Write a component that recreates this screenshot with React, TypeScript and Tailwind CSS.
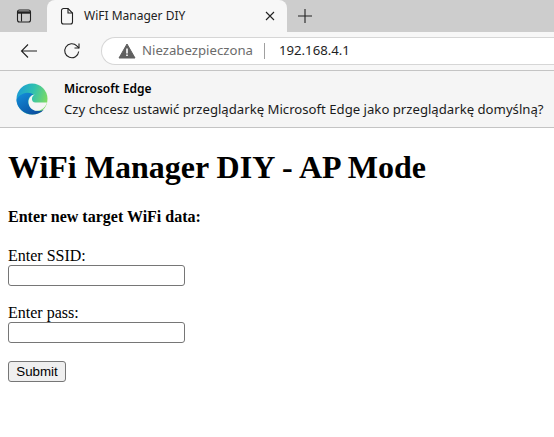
const uiFont = "font-['Noto_Sans','Open_Sans',sans-serif]";

function TabStripIcon() {
  return (
    <svg width="16" height="16" viewBox="0 0 16 16" fill="none" stroke="#222" strokeWidth="1.1">
      <rect x="1.5" y="2" width="13" height="12" rx="2" />
      <path d="M2 4.5H14" strokeWidth="2.4" />
      <path d="M5.5 5V13.5" />
    </svg>
  );
}

function PageIcon() {
  return (
    <svg width="16" height="18" viewBox="0 0 16 18" fill="none" stroke="#222" strokeWidth="1.1">
      <path d="M2.5 3.5a2 2 0 0 1 2-2H9l4.5 4.5v9a2 2 0 0 1-2 2h-7a2 2 0 0 1-2-2z" />
      <path d="M9 1.5V6h4.5" />
    </svg>
  );
}

function EdgeLogo() {
  return (
    <svg width="32" height="32" viewBox="0 0 32 32">
      <defs>
        <linearGradient id="edgeTop" x1="0" y1="0.2" x2="1" y2="0.5">
          <stop offset="0" stopColor="#1a9bd8" />
          <stop offset="0.5" stopColor="#2fc0b0" />
          <stop offset="1" stopColor="#7edb62" />
        </linearGradient>
        <linearGradient id="edgeLow" x1="0" y1="0" x2="0.7" y2="1">
          <stop offset="0" stopColor="#1390dc" />
          <stop offset="1" stopColor="#0b4f9f" />
        </linearGradient>
      </defs>
      <circle cx="16" cy="16" r="15.5" fill="url(#edgeTop)" />
      <path d="M0.5 17C1 25 8 31.5 16.5 31.5c4.4 0 8.3-1.7 11.1-4.5-3.4 1.500-7.6 1.400-10.900-.7C12.500 23.700 11 18.500 13 15c1-1.800 2.800-3 4.800-3.200-2.400-2-6.800-2.800-10.800-1C3.500 12.300 1 14.500.5 17z" fill="url(#edgeLow)" />
      <path d="M31 19.500C28 19.500 22 19.500 19.500 19.500C17 19.500 15.500 17.500 16 15C16.500 13 17.500 12 19 11.500C15.500 11.500 12.500 15 12.500 19C12.500 24 16.500 28 21 27.800C24.500 27.600 27 26 29 23.500C30 22 30.700 21 31 19.500z" fill="#f5f5f5" />
    </svg>
  );
}

function FormField({ label }: { label: string }) {
  return (
    <label className="block">
      <span className="block h-[18px] leading-[18px]">{label}</span>
      <input
        type="text"
        className="block h-[21px] w-[177px] rounded-[3px] border border-[#767676] bg-white"
      />
    </label>
  );
}

export default function App() {
  return (
    <div className="flex h-[437px] w-[554px] flex-col overflow-hidden bg-white text-black">
      <div className={`${uiFont} flex h-[32px] items-end bg-[#cdcdcd] text-[#222]`}>
        <div className="flex h-[32px] w-[47px] items-center justify-center pl-[1px]">
          <TabStripIcon />
        </div>
        <div className="flex h-[32px] w-[240px] items-center rounded-t-[8px] bg-[#f7f7f7] pl-[12px] pr-[12px]">
          <PageIcon />
          <span className="ml-[9px] flex-1 text-[12px] leading-none">WiFI Manager DIY</span>
          <svg width="10" height="10" viewBox="0 0 10 10" stroke="#222" strokeWidth="1.1">
            <path d="M1 1L9 9M9 1L1 9" />
          </svg>
        </div>
        <div className="flex h-[32px] w-[36px] items-center justify-center">
          <svg width="16" height="16" viewBox="0 0 16 16" stroke="#222" strokeWidth="1.1">
            <path d="M8 1V15M1 8H15" />
          </svg>
        </div>
      </div>

      <div className={`${uiFont} flex h-[38px] items-center bg-[#f7f7f7]`}>
        <div className="flex w-[47px] justify-center pl-[10px]">
          <svg width="18" height="16" viewBox="0 0 18 16" fill="none" stroke="#222" strokeWidth="1.1">
            <path d="M1.5 8H17M8 1.5L1.5 8L8 14.5" />
          </svg>
        </div>
        <div className="flex w-[54px] justify-center pr-[4px]">
          <svg width="18" height="18" viewBox="0 0 18 18" fill="none" stroke="#222" strokeWidth="1.1">
            <path d="M15.7 9.5a7 7 0 1 1-1.9-5.6L16 6" />
            <path d="M16 1.5V6H11.5" />
          </svg>
        </div>
        <div className="flex h-[28px] flex-1 items-center rounded-l-[14px] border-y border-l border-[#d6d6d6] bg-white pl-[16px] text-[13.2px]">
          <svg width="18" height="16" viewBox="0 0 18 16">
            <path d="M9 1L17 15H1z" fill="#5f5f5f" stroke="#5f5f5f" strokeLinejoin="round" />
            <path d="M8.2 5.5h1.6v5H8.2zM8.2 11.5h1.6v1.6H8.2z" fill="#fff" />
          </svg>
          <span className="ml-[6px] text-[#6b6b6b]">Niezabezpieczona</span>
          <span className="ml-[11px] h-[16px] w-px bg-[#a0a0a0]" />
          <span className="ml-[14px] text-[#1f1f1f]">192.168.4.1</span>
        </div>
      </div>

      <div className={`${uiFont} flex h-[58px] items-center border-y border-[#c4c4c4] bg-[#f5f5f5]`}>
        <div className="ml-[16px] flex w-[48px]">
          <EdgeLogo />
        </div>
        <div className="text-[13.16px] leading-[20px] text-[#1b1b1b]">
          <div className="text-[12px] font-semibold text-black">Microsoft Edge</div>
          <div>Czy chcesz ustawić przeglądarkę Microsoft Edge jako przeglądarkę domyślną?</div>
        </div>
      </div>

      <main className="px-[8px] font-['Liberation_Serif',serif] text-[16px]">
        <h1 className="mt-[21px] text-[32px] font-bold leading-[37px]">WiFi Manager DIY - AP Mode</h1>
        <h4 className="mt-[22px] font-bold leading-[18px]">Enter new target WiFi data:</h4>
        <form className="mt-[21px]">
          <FormField label="Enter SSID:" />
          <div className="mt-[18px]">
            <FormField label="Enter pass:" />
          </div>
          <button
            type="button"
            className="mt-[18px] block h-[21px] w-[58px] rounded-[3px] border border-[#767676] bg-[#efefef] font-['Liberation_Sans',sans-serif] text-[13.33px] leading-none"
          >
            Submit
          </button>
        </form>
      </main>
    </div>
  );
}
